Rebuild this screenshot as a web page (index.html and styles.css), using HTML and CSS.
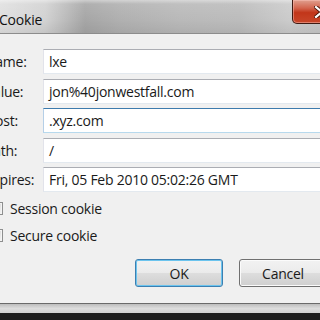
FILE: index.html
```html
<!DOCTYPE html>
<html>
<head>
<meta charset="utf-8">
<link rel="stylesheet" href="styles.css">
</head>
<body>
<div class="window">
  <div class="titlebar">
    <span class="title">Cookie</span>
    <div class="close">
      <svg class="x" width="16" height="12" viewBox="0 0 16 12">
        <path d="M2 1 L14 11 M14 1 L2 11" stroke="#4a1508" stroke-width="4" stroke-linecap="square"/>
        <path d="M2 1 L14 11 M14 1 L2 11" stroke="#ffffff" stroke-width="2.2" stroke-linecap="square"/>
      </svg>
    </div>
  </div>
  <div class="content">
    <div class="form">
      <span class="lbl">Name:</span><div class="field">lxe</div>
      <span class="lbl">Value:</span><div class="field">jon%40jonwestfall.com</div>
      <span class="lbl">Host:</span><div class="field focus">.xyz.com</div>
      <span class="lbl">Path:</span><div class="field">/</div>
      <span class="lbl">Expires:</span><div class="field">Fri, 05 Feb 2010 05:02:26 GMT</div>
    </div>
    <div class="checks">
      <div class="check"><span class="box"></span><span>Session cookie</span></div>
      <div class="check"><span class="box"></span><span>Secure cookie</span></div>
    </div>
    <div class="buttons">
      <div class="btn default">OK</div>
      <div class="btn">Cancel</div>
    </div>
  </div>
  <div class="frame-bottom"></div>
</div>
</body>
</html>
```
FILE: styles.css
```css
html, body {
  margin: 0;
  width: 320px;
  height: 320px;
  overflow: hidden;
  background: #1c1c1c;
  font-family: "Open Sans", "Noto Sans", sans-serif;
  color: #1a1a1a;
}
.window {
  width: 340px;
  height: 313px;
  display: flex;
  flex-direction: column;
  background: #f0f0f0;
}
.titlebar {
  height: 33px;
  flex: none;
  display: flex;
  align-items: flex-start;
  border-bottom: 1px solid #8c8c8c;
  background:
    linear-gradient(180deg, rgba(255,255,255,0.45) 0px, rgba(255,255,255,0.1) 4px, rgba(255,255,255,0) 20px, rgba(0,0,0,0.06) 33px),
    linear-gradient(90deg, #e0e0e0 0px, #d2d2d2 45px, #a6a6a6 85px, #b0b0b0 120px, #b9b9b9 180px, #bcbcbc 240px, #cbcbcb 290px, #c4c4c4 340px);
}
.title {
  font-size: 14px;
  letter-spacing: -0.2px;
  line-height: 20px;
  padding-top: 10px;
  margin-left: -1px;
  color: #111;
}
.close {
  margin-left: auto;
  width: 48px;
  height: 24px;
  box-sizing: border-box;
  border: 1px solid #3f1a12;
  border-top: none;
  border-radius: 0 0 4px 5px;
  background: linear-gradient(180deg, #e0a08f 0%, #d3654e 35%, #c2361a 55%, #c8472a 100%);
  box-shadow: inset 0 0 0 1px rgba(255,200,190,0.45);
  display: flex;
  align-items: center;
  padding-left: 21px;
}
.x {
  display: block;
}
.content {
  flex: 1;
  padding-top: 15px;
  display: flex;
  flex-direction: column;
}
.form {
  display: grid;
  grid-template-columns: 58px 1fr;
  row-gap: 4.5px;
  margin-left: -15px;
}
.lbl, .field, .check, .btn {
  font-size: 14px;
  letter-spacing: -0.25px;
}
.lbl {
  line-height: 25px;
  white-space: nowrap;
}
.field {
  height: 25px;
  box-sizing: border-box;
  border: 1px solid;
  border-color: #abadb3 #e2e3ea #e3e9ef #e2e3ea;
  background: #fff;
  padding-left: 5px;
  line-height: 23px;
  white-space: nowrap;
}
.field.focus {
  border-color: #3d7bad #b5cfe7 #b7d9ed #b5cfe7;
}
.checks {
  margin-top: 10px;
  margin-left: -10px;
  display: flex;
  flex-direction: column;
  gap: 14px;
}
.check {
  height: 13px;
  display: flex;
  align-items: center;
  gap: 7px;
}
.box {
  width: 13px;
  height: 13px;
  box-sizing: border-box;
  border: 1px solid #8e8f8f;
  background: linear-gradient(135deg, #cbcbcb, #f6f6f6);
  box-shadow: inset 0 0 0 1px #f4f4f4;
}
.buttons {
  margin-top: 17px;
  padding-left: 135px;
  display: flex;
  gap: 16px;
}
.btn {
  width: 88px;
  height: 28px;
  box-sizing: border-box;
  border: 1px solid #707070;
  border-radius: 3px;
  background: linear-gradient(180deg, #f2f2f2 0%, #ebebeb 48%, #dddddd 52%, #cfcfcf 100%);
  box-shadow: inset 0 0 0 1px #fbfbfb;
  display: flex;
  align-items: center;
  justify-content: center;
}
.btn.default {
  border-color: #3c7fb1;
  box-shadow: inset 0 0 0 1px #6cc4ee;
}
.frame-bottom {
  height: 10px;
  flex: none;
  box-sizing: border-box;
  border-top: 1px solid #6a6a6a;
  background: linear-gradient(180deg, #bdbdbd 0%, #dcdcdc 50%, #d0d0d0 100%);
}
```
